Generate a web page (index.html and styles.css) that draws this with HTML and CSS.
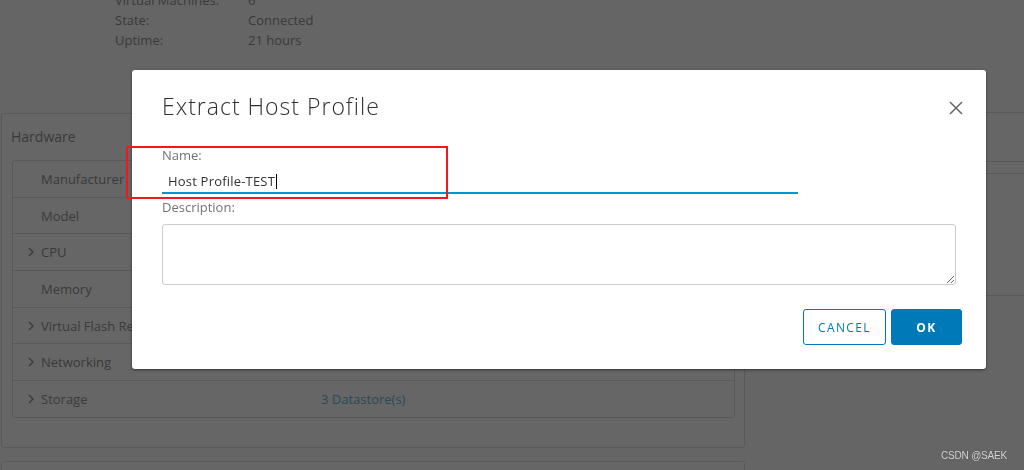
FILE: index.html
```html
<!DOCTYPE html>
<html lang="en">
<head>
	<meta charset="utf-8" />
	<title>Extract Host Profile</title>
	<link rel="stylesheet" href="styles.css">
</head>
<body>

    <!-- host summary, mostly scrolled out of view -->
    <div class="summary">
        <div class="key">Virtual Machines:</div><div class="val">6</div>
        <div class="key">State:</div><div class="val">Connected</div>
        <div class="key">Uptime:</div><div class="val">21 hours</div>
    </div>

    <div class="cards">
        <div class="card hardware">
            <div class="card-title">Hardware</div>
            <div class="stack">
                <div class="row"><span class="caret-col"></span><span class="label">Manufacturer</span></div>
                <div class="row"><span class="caret-col"></span><span class="label">Model</span></div>
                <div class="row"><span class="caret-col"><svg viewBox="0 0 6 10"><path d="M1 1l4 4-4 4"/></svg></span><span class="label">CPU</span></div>
                <div class="row"><span class="caret-col"></span><span class="label">Memory</span></div>
                <div class="row"><span class="caret-col"><svg viewBox="0 0 6 10"><path d="M1 1l4 4-4 4"/></svg></span><span class="label">Virtual Flash Resource</span></div>
                <div class="row"><span class="caret-col"><svg viewBox="0 0 6 10"><path d="M1 1l4 4-4 4"/></svg></span><span class="label">Networking</span></div>
                <div class="row"><span class="caret-col"><svg viewBox="0 0 6 10"><path d="M1 1l4 4-4 4"/></svg></span><span class="label">Storage</span><a class="value" href="#">3 Datastore(s)</a></div>
            </div>
        </div>
        <div class="card side">
            <div class="side-head"></div>
            <div class="side-strip"></div>
        </div>
    </div>

    <div class="cards">
        <div class="card hardware next"></div>
    </div>

    <div class="backdrop"></div>

    <div class="modal">
        <div class="modal-head">
            <h3 class="modal-title">Extract Host Profile</h3>
            <button class="close" type="button">
                <svg viewBox="0 0 14 14"><path d="M1 1l12 12M13 1L1 13"/></svg>
            </button>
        </div>

        <div class="modal-body">
            <label class="field-label">Name:</label>
            <div class="field-input">Host Profile-TEST<span class="cursor"></span></div>
            <label class="field-label desc">Description:</label>
            <textarea class="field-area"></textarea>
        </div>

        <div class="modal-foot">
            <button class="btn btn-outline" type="button">Cancel</button>
            <button class="btn btn-primary" type="button">OK</button>
        </div>

        <!-- screenshot annotation -->
        <div class="mark"></div>
    </div>

    <div class="watermark">CSDN @SAEK</div>

</body>
</html>
```

FILE: styles.css
```css
html, body {
    margin:0;
    height:100%;
    overflow:hidden;
}

body {
    background:#fafafa;
    color:#565656;
    font-family:"Open Sans", "Liberation Sans", sans-serif;
    font-size:13px;
}

/* Page behind the dialog */

.summary {
    display:grid;
    grid-template-columns:133px auto;
    grid-auto-rows:20px;
    line-height:20px;
    margin-top:-10px;
    padding-left:115px;
}

.cards {
    display:flex;
    gap:10px;
    padding-left:1px;
}

.card {
    flex:none;
    box-sizing:border-box;
    background:#fff;
    border:1px solid #ccc;
    border-radius:3px;
}

.hardware {
    width:744px;
    margin-top:63px;
    padding:0 9px 29px 10px;
}

.hardware.next {
    margin-top:13px;
    height:40px;
}

.card-title {
    height:46px;
    line-height:46px;
    margin-left:-1px;
    font-size:14px;
}

.stack {
    border:1px solid #ccc;
    border-radius:3px;
}

.row {
    display:flex;
    align-items:center;
    height:35.7px;
    border-bottom:1px solid #ccc;
}

.row:last-child {
    border-bottom:0;
}

.caret-col {
    display:flex;
    box-sizing:border-box;
    width:28px;
    padding-left:15px;
}

.caret-col svg {
    width:6px;
    height:10px;
    fill:none;
    stroke:#565656;
    stroke-width:1.4;
}

.label {
    width:280px;
    white-space:nowrap;
    overflow:hidden;
}

.value {
    color:#0095d3;
    text-decoration:none;
}

.side {
    width:280px;
    height:184px;
    margin-top:62px;
}

.side-head {
    height:48px;
    border-bottom:1px solid #ccc;
}

.side-strip {
    height:11px;
    border-bottom:1px solid #ccc;
}

.backdrop {
    position:fixed;
    inset:0;
    background:rgba(48,48,48,.74);
}

/* Dialog */

.modal {
    position:fixed;
    left:132px;
    top:70px;
    width:854px;
    box-sizing:border-box;
    padding:20px 24px 24px 30px;
    background:#fff;
    border-radius:3px;
    box-shadow:0 1px 3px rgba(0,0,0,.5);
    color:#565656;
}

.modal-head {
    display:flex;
    align-items:center;
    justify-content:space-between;
    height:32px;
}

.modal-title {
    margin:0;
    font-family:"Open Sans", "Liberation Sans", sans-serif;
    font-weight:300;
    font-size:23px;
    letter-spacing:1px;
    color:#313131;
}

.close {
    display:flex;
    padding:0;
    margin:4px -1px 0 0;
    border:0;
    background:none;
}

.close svg {
    width:14px;
    height:14px;
    fill:none;
    stroke:#666;
    stroke-width:1.5;
}

.modal-body {
    display:flex;
    flex-direction:column;
    align-items:flex-start;
    margin-top:24px;
    padding-right:6px;
}

.field-label {
    line-height:18px;
    color:#737373;
}

.field-label.desc {
    margin-top:4px;
}

.field-input {
    display:flex;
    align-items:center;
    box-sizing:border-box;
    width:636px;
    height:24px;
    margin-top:6px;
    padding-left:6px;
    border-bottom:2px solid #0095d3;
    color:#333;
    letter-spacing:.2px;
}

.cursor {
    width:1px;
    height:15px;
    margin-left:1px;
    background:#000;
}

.field-area {
    box-sizing:border-box;
    width:100%;
    height:61px;
    margin:8px 0 0;
    border:1px solid #ccc;
    border-radius:3px;
    font:inherit;
}

.modal-foot {
    display:flex;
    justify-content:flex-end;
    gap:5px;
    margin-top:24px;
}

.btn {
    box-sizing:border-box;
    height:36px;
    padding:0 12px;
    border:1px solid #0079b8;
    border-radius:3px;
    font-family:"Open Sans", "Liberation Sans", sans-serif;
    font-size:12px;
    letter-spacing:1.4px;
    text-transform:uppercase;
}

.btn-outline {
    width:83px;
    background:#fff;
    color:#0079b8;
    font-weight:500;
}

.btn-primary {
    width:71px;
    background:#0079b8;
    color:#fff;
    font-weight:700;
}

.mark {
    position:absolute;
    left:-6px;
    top:76px;
    width:322px;
    height:53px;
    box-sizing:border-box;
    border:2px solid #f01818;
}

.watermark {
    position:fixed;
    right:17px;
    bottom:9px;
    font-family:"Liberation Sans", sans-serif;
    font-size:10px;
    letter-spacing:-.2px;
    color:#d8d8d8;
    text-shadow:0 0 1px rgba(0,0,0,.4);
}
```
